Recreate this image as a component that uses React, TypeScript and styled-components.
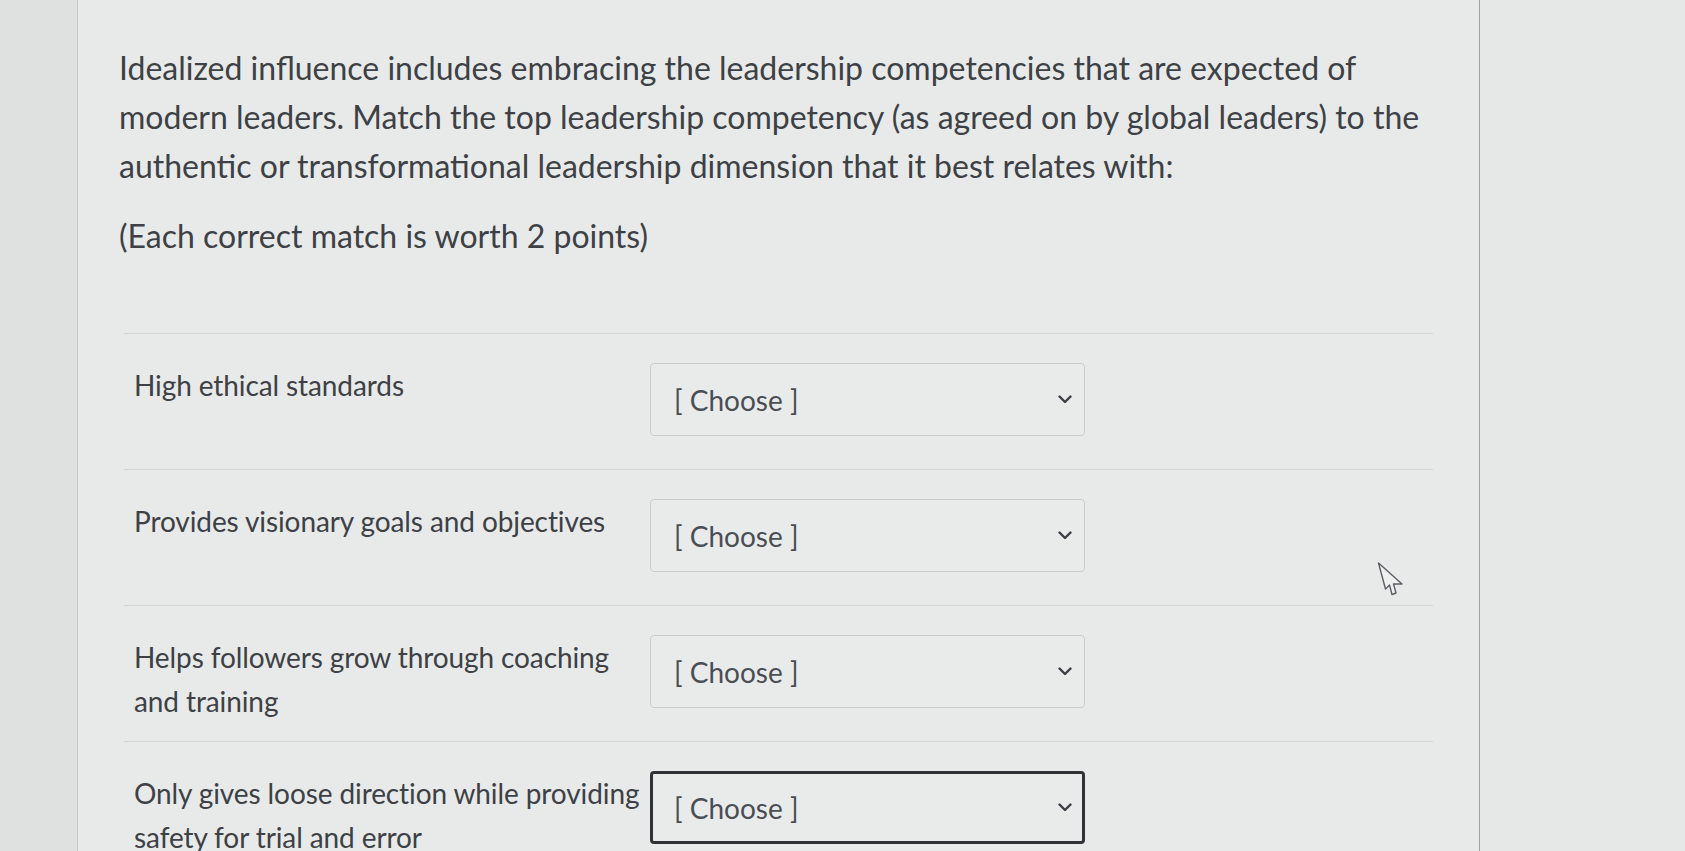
import React from "react";
import styled, { createGlobalStyle } from "styled-components";

const Global = createGlobalStyle`
  html, body { margin: 0; padding: 0; }
  body {
    background: #e2e4e4;
    font-family: Lato, "Open Sans", "Liberation Sans", sans-serif;
    color: #3b3f43;
    overflow: hidden;
  }
`;

const Page = styled.div`
  position: relative;
  width: 1685px;
  height: 851px;
  display: flex;
`;

const Gutter = styled.div`
  width: 77px;
  flex: none;
  background: #dfe1e1;
`;

const Panel = styled.main`
  width: 1403px;
  flex: none;
  background: #e8eaea;
  border-left: 1px solid #c4c6c8;
  border-right: 1px solid #9fa2a5;
  padding: 43px 46px 0 41px;
  box-sizing: border-box;
`;

const Aside = styled.div`
  flex: 1;
  background: #e6e8e8;
`;

const Para = styled.p`
  margin: 0 0 21px;
  font-size: 32px;
  line-height: 49px;
  color: #3d4145;
`;

const Matches = styled.div`
  margin: 73px 0 0 5px;
`;

const Row = styled.div`
  display: grid;
  grid-template-columns: 516px 435px;
  align-items: start;
  height: 136px;
  box-sizing: border-box;
  border-top: 1.5px solid #d3d5d6;
  padding: 29px 0 0 10px;
`;

const Label = styled.div`
  font-size: 28px;
  line-height: 44px;
  color: #3d4145;
  padding-right: 2px;
  letter-spacing: -0.1px;
`;

const Select = styled.div<{ $focused?: boolean }>`
  height: 73px;
  box-sizing: border-box;
  border: ${(p) => (p.$focused ? "3px solid #2f3336" : "1.5px solid #c9cbcd")};
  border-radius: 4px;
  background: #e9ebeb;
  display: flex;
  align-items: center;
  justify-content: space-between;
  padding: 0 ${(p) => (p.$focused ? "10px" : "12px")} 0 ${(p) => (p.$focused ? "21px" : "23px")};
  font-size: 28px;
  color: #4a4e53;
`;

const Chevron = () => (
  <svg width="14" height="9" viewBox="0 0 14 9" aria-hidden>
    <path d="M1.5 1.5 L7 7 L12.5 1.5" fill="none" stroke="#3a3e42" strokeWidth="2.4" strokeLinecap="round" strokeLinejoin="round" />
  </svg>
);

const Cursor = styled.svg`
  position: absolute;
  left: 1365px;
  top: 560px;
`;

const rows = [
  { label: "High ethical standards" },
  { label: "Provides visionary goals and objectives" },
  { label: "Helps followers grow through coaching and training" },
  { label: "Only gives loose direction while providing safety for trial and error", focused: true },
];

export default function App() {
  return (
    <Page>
      <Global />
      <Gutter />
      <Panel>
        <Para>
          Idealized influence includes embracing the leadership competencies that are expected of
          modern leaders. Match the top leadership competency (as agreed on by global leaders) to the
          authentic or transformational leadership dimension that it best relates with:
        </Para>
        <Para>(Each correct match is worth 2 points)</Para>
        <Matches>
          {rows.map((r) => (
            <Row key={r.label}>
              <Label>{r.label}</Label>
              <Select $focused={r.focused}>
                <span>[ Choose ]</span>
                <Chevron />
              </Select>
            </Row>
          ))}
        </Matches>
      </Panel>
      <Aside />
      <Cursor width="45" height="45" viewBox="0 0 45 45">
        <path d="M13.5 3 L20.5 29 L24.5 25 L27 34.5 L31 33 L28.5 24 L37 24 Z" fill="#eef0f0" stroke="#5c6064" strokeWidth="1.4" strokeLinejoin="round" />
      </Cursor>
    </Page>
  );
}
